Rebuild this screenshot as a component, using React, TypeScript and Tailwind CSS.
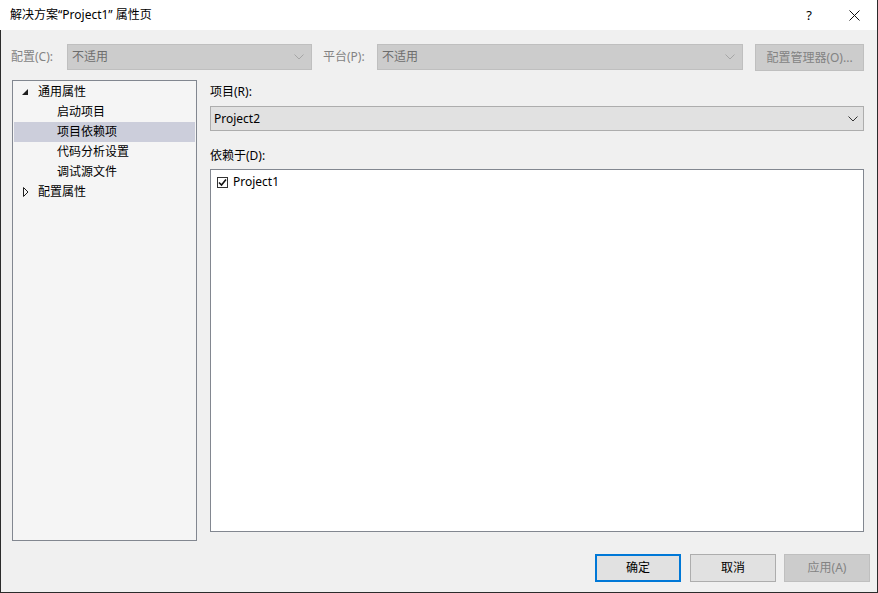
import type { FC } from "react";

const font = { fontFamily: '"Noto Sans", "Noto Sans CJK SC", sans-serif' };

const Chevron: FC<{ color: string }> = ({ color }) => (
  <svg width="10" height="6" viewBox="0 0 10 6" fill="none">
    <path d="M0.5 0.5 L5 5 L9.5 0.5" stroke={color} strokeWidth="1" />
  </svg>
);

const DisabledCombo: FC<{ width: string; value: string }> = ({ width, value }) => (
  <div className={`${width} flex h-[26px] items-center justify-between border border-[#bfbfbf] bg-[#cccccc] pl-[4px] pr-[7px]`}>
    <span className="text-[12px] leading-[16px] text-[#6d6d6d]">{value}</span>
    <Chevron color="#a6a6a6" />
  </div>
);

const treeRows = [
  { label: "通用属性", indent: "pl-[24px]", icon: "open" },
  { label: "启动项目", indent: "pl-[43px]" },
  { label: "项目依赖项", indent: "pl-[43px]", selected: true },
  { label: "代码分析设置", indent: "pl-[43px]" },
  { label: "调试源文件", indent: "pl-[43px]" },
  { label: "配置属性", indent: "pl-[24px]", icon: "closed" },
];

export default function App() {
  return (
    <div className="flex h-[593px] w-[878px] flex-col border-r border-[#2b2b2b] bg-white text-[12px] text-black" style={font}>
      {/* title bar */}
      <div className="flex h-[30px] items-center bg-white">
        <span className="pl-[10px] leading-[16px]">解决方案“Project1” 属性页</span>
        <span className="ml-auto w-[12px] text-center text-[13px] leading-[16px]">?</span>
        <div className="ml-[33px] mr-[17px] flex h-[16px] w-[12px] items-center justify-center">
          <svg width="11" height="11" viewBox="0 0 11 11">
            <path d="M0.5 0.5 L10.5 10.5 M10.5 0.5 L0.5 10.5" stroke="#111" strokeWidth="1" />
          </svg>
        </div>
      </div>

      <div className="flex flex-1 flex-col border-b border-l border-[#2b2b2b] bg-[#f0f0f0] pt-[14px]">
        {/* configuration row */}
        <div className="flex items-start pl-[10px]">
          <span className="flex h-[26px] w-[56px] items-center text-[#838383]">配置(C):</span>
          <DisabledCombo width="w-[245px]" value="不适用" />
          <span className="ml-[11px] flex h-[26px] w-[54px] items-center text-[#838383]">平台(P):</span>
          <DisabledCombo width="w-[366px]" value="不适用" />
          <div className="ml-[12px] flex h-[27px] w-[109px] items-center justify-center border border-[#bfbfbf] bg-[#cccccc] text-[#838383]">
            配置管理器(O)...
          </div>
        </div>

        {/* main area */}
        <div className="mt-[9px] flex pl-[11px]">
          <div className="h-[461px] w-[185px] border border-[#828790] bg-[#f5f5f5] px-[1px] pt-[1px]">
            {treeRows.map((row) => (
              <div
                key={row.label}
                className={`relative flex h-[20px] items-center ${row.indent} ${row.selected ? "bg-[#cccedb]" : ""}`}
              >
                {row.icon === "open" ? (
                  <svg className="absolute left-[8px] top-[7px]" width="7" height="7" viewBox="0 0 7 7">
                    <path d="M6 0 L6 6 L0 6 Z" fill="#1e1e1e" />
                  </svg>
                ) : null}
                {row.icon === "closed" ? (
                  <svg className="absolute left-[9px] top-[5px]" width="6" height="10" viewBox="0 0 6 10">
                    <path d="M0.5 0.5 L5 5 L0.5 9.5 Z" fill="none" stroke="#1e1e1e" strokeWidth="1" />
                  </svg>
                ) : null}
                <span className="leading-[16px]">{row.label}</span>
              </div>
            ))}
          </div>

          <div className="ml-[13px] flex w-[654px] flex-col">
            <div className="h-[26px] pt-[4px] leading-[16px]">项目(R):</div>
            <div className="flex h-[25px] items-center justify-between border border-[#adadad] bg-[#e1e1e1] pl-[3px] pr-[5px]">
              <span className="leading-[16px]">Project2</span>
              <Chevron color="#333333" />
            </div>
            <div className="h-[38px] pt-[17px] leading-[16px]">依赖于(D):</div>
            <div className="h-[363px] border border-[#828790] bg-white pt-[4px]">
              <div className="flex h-[16px] items-center pl-[6px]">
                <div className="flex h-[11px] w-[11px] items-center justify-center border border-[#333333] bg-white">
                  <svg width="9" height="9" viewBox="0 0 9 9">
                    <path d="M1 4.5 L3.5 7 L8 1.5" fill="none" stroke="#111" strokeWidth="1.6" />
                  </svg>
                </div>
                <span className="ml-[5px] leading-[16px]">Project1</span>
              </div>
            </div>
          </div>
        </div>

        {/* buttons */}
        <div className="mt-[13px] flex justify-end pr-[7px]">
          <div className="flex h-[28px] w-[86px] items-center justify-center border-2 border-[#0078d7] bg-[#e1e1e1]">确定</div>
          <div className="ml-[9px] flex h-[28px] w-[86px] items-center justify-center border border-[#adadad] bg-[#e1e1e1]">取消</div>
          <div className="ml-[8px] flex h-[28px] w-[86px] items-center justify-center border border-[#bfbfbf] bg-[#cccccc] text-[#838383]">
            应用(A)
          </div>
        </div>
      </div>
    </div>
  );
}
